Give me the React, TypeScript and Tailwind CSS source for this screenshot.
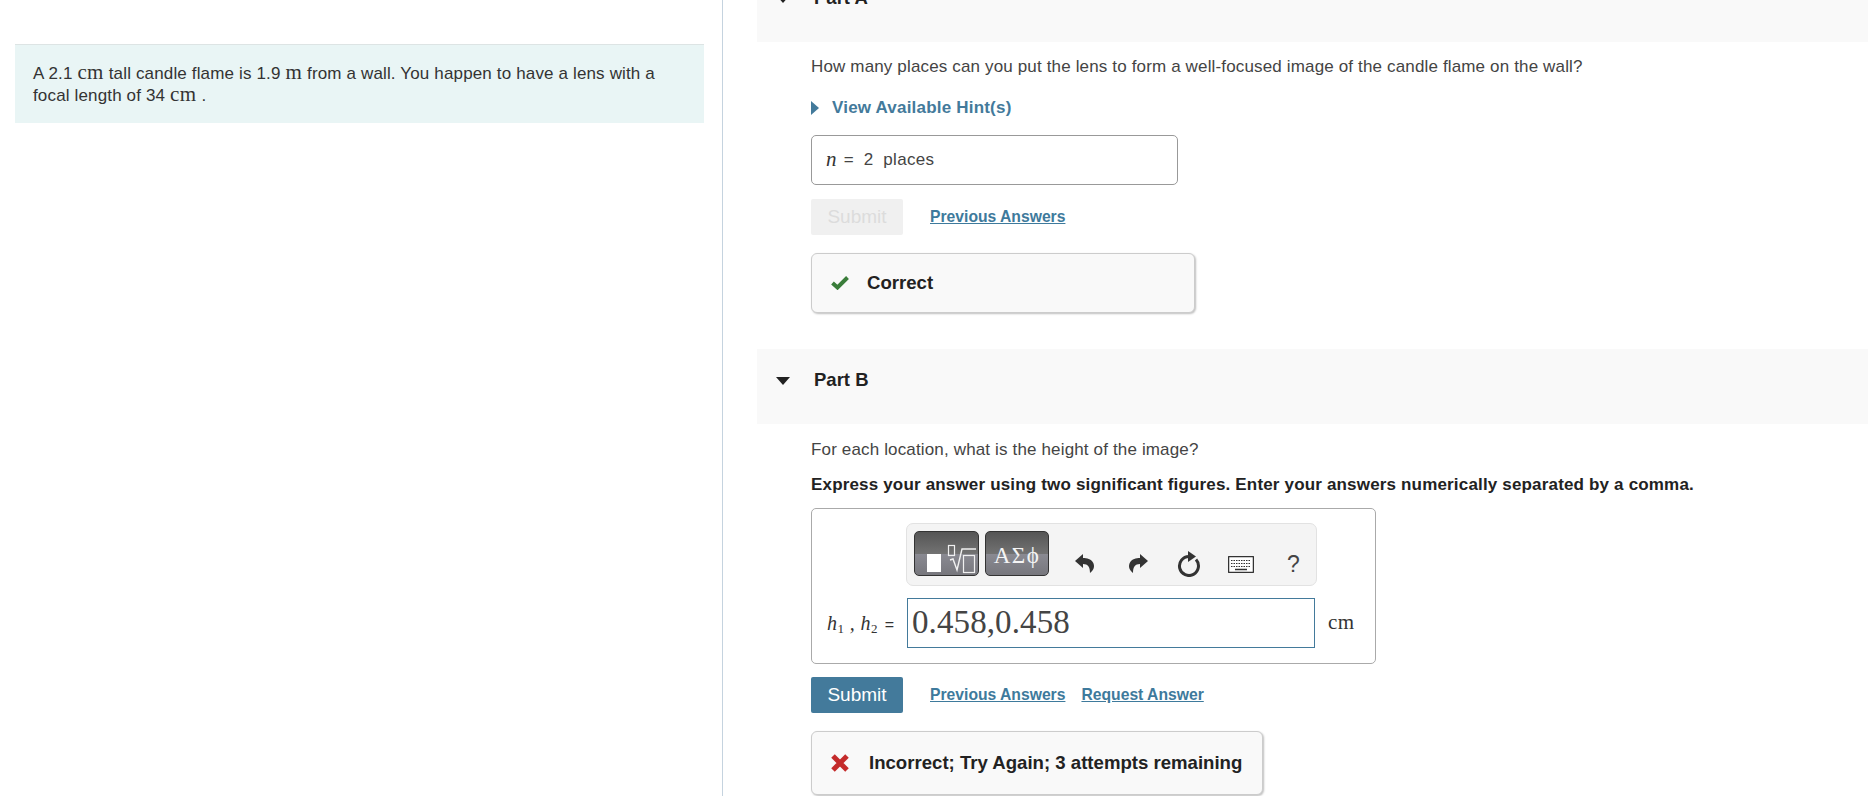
const sans = "font-['Liberation_Sans',Arial,sans-serif]";
const serif = "font-['Liberation_Serif','Times_New_Roman',serif]";

function Unit({ children }: { children: string }) {
  return <span className={`${serif} text-[21px] tracking-[0.4px] text-[#333]`}>{children}</span>;
}

function PartHeader({ label }: { label: string }) {
  return (
    <div className="flex h-[75px] bg-[#f9f9f9] pl-[19px] pt-[20px]">
      <svg className="mt-[8px]" width="14" height="8" viewBox="0 0 14 8" fill="#222">
        <path d="M0 0h14L7 8z" />
      </svg>
      <span className="ml-[24px] text-[18.5px] leading-[22px] font-bold tracking-normal text-[#222]">{label}</span>
    </div>
  );
}

function SubmitRow({ disabled, request }: { disabled?: boolean; request?: boolean }) {
  return (
    <div className="flex items-center tracking-normal">
      <button
        className={`h-[36px] w-[92px] rounded-[2px] text-[19px] ${
          disabled ? 'bg-[#f0f0f0] text-[#dcdcdc]' : 'bg-[#437a9b] text-white'
        }`}
      >
        Submit
      </button>
      <a className="ml-[27px] text-[15.7px] font-bold text-[#3e7a9c] underline">Previous Answers</a>
      {request && <a className="ml-[16px] text-[15.7px] font-bold text-[#3e7a9c] underline">Request Answer</a>}
    </div>
  );
}

function Feedback({ children, icon, width }: { children: string; icon: React.ReactNode; width: string }) {
  return (
    <div
      className={`flex items-center rounded-[6px] border border-[#ccc] bg-[#f9f9f9] pl-[19px] text-[18.6px] font-bold tracking-normal text-[#222] shadow-[1px_1px_2px_rgba(0,0,0,0.25)] ${width}`}
    >
      {icon}
      {children}
    </div>
  );
}

function PaletteButton({ children, width }: { children: React.ReactNode; width: string }) {
  return (
    <div
      className={`flex h-[45px] items-center justify-center overflow-hidden rounded-[5px] border border-[#333] bg-[linear-gradient(#555_0%,#727272_50%,#8a8a92_51%,#77777d_100%)] ${width}`}
    >
      {children}
    </div>
  );
}

function Toolbar() {
  return (
    <div className="ml-[94px] flex h-[63px] w-[411px] items-start rounded-[7px] border border-[#e2e2e2] bg-[#f4f4f4] pt-[7px] pl-[7px]">
      <PaletteButton width="w-[65px]">
        <svg width="63" height="43" viewBox="0 0 63 43" fill="none" stroke="#f0f0f0" strokeWidth="1.2">
          <rect x="12" y="22" width="14" height="18" fill="#fff" stroke="none" />
          <rect x="33.5" y="13.5" width="6" height="10" />
          <path d="M35 28l3-1 4 11 5-21h14" strokeWidth="1.4" />
          <rect x="48.5" y="23.5" width="11" height="17" />
        </svg>
      </PaletteButton>
      <div className="ml-[6px]">
        <PaletteButton width="w-[64px]">
          <span className={`${serif} mt-[6px] text-[23px] tracking-[1.5px] text-[#f4f4f4]`}>ΑΣϕ</span>
        </PaletteButton>
      </div>
      <div className="mt-[20px] ml-[26px] flex items-center">
        <svg width="20" height="22" viewBox="0 0 20 22" fill="#333">
          <path d="M8 1L0 8l8 7v-4c5 0 7 3 7 9 4-3 5-7 3-10.500C16 6 12 5 8 5z" />
        </svg>
        <svg className="ml-[33px]" width="20" height="22" viewBox="0 0 20 22" fill="#333">
          <path d="M12 1l8 7-8 7v-4c-5 0-7 3-7 9-4-3-5-7-3-10.500C4 6 8 5 12 5z" />
        </svg>
        <svg className="ml-[29px]" width="24" height="26" viewBox="0 0 24 26" fill="none" stroke="#333" strokeWidth="3">
          <path d="M19 8.600A9.500 9.500 0 1 1 12 5.500" />
          <path d="M11 0l8 5.500-8 5.500z" fill="#333" stroke="none" />
        </svg>
        <svg className="ml-[27px]" width="26" height="17" viewBox="0 0 26 17" fill="none" stroke="#333">
          <rect x="0.500" y="0.500" width="25" height="16" rx="1" fill="#fff" strokeWidth="1.500" />
          <path d="M3 4.500h20M3 7.500h20M3 10.500h20" strokeDasharray="1.500 1" />
          <path d="M7 13.500h12" strokeWidth="1.500" />
        </svg>
        <span className="ml-[33px] text-[23px] leading-[24px] text-[#444]">?</span>
      </div>
    </div>
  );
}

export default function App() {
  return (
    <div className={`flex h-[796px] overflow-hidden bg-white ${sans} text-[17px] tracking-[0.15px] text-[#444]`}>
      <div className="h-full w-[723px] shrink-0 border-r border-[#c5d3df] pt-[44px] pl-[15px]">
        <div className="h-[79px] w-[689px] border-t border-[#dde4e4] bg-[#e9f5f5] pt-[17px] pl-[18px] leading-[21px] text-[#333]">
          <p>
            A 2.1 <Unit>cm</Unit> tall candle flame is 1.9 <Unit>m</Unit> from a wall. You happen to have a lens with a
          </p>
          <p>
            focal length of 34 <Unit>cm</Unit> .
          </p>
        </div>
      </div>

      <div className="-mt-[33px] flex-1 pl-[34px]">
        <PartHeader label="Part A" />

        <div className="pl-[54px]">
          <p className="mt-[15px] leading-[20px]">
            How many places can you put the lens to form a well-focused image of the candle flame on the wall?
          </p>
          <div className="mt-[21px] flex h-[20px] items-center text-[#437a9b]">
            <svg width="8" height="14" viewBox="0 0 8 14" fill="#437a9b">
              <path d="M0 0l8 7-8 7z" />
            </svg>
            <span className="ml-[13px] font-bold tracking-[0.2px]">View Available Hint(s)</span>
          </div>
          <div className="mt-[17px] flex h-[50px] w-[367px] items-center rounded-[5px] border border-[#999] pl-[14px]">
            <i className={`${serif} text-[21px] text-[#333]`}>n</i>
            <span className="ml-[7px]">=</span>
            <span className="ml-[10px]">2</span>
            <span className="ml-[10px] tracking-[0.3px]">places</span>
          </div>
          <div className="mt-[14px]">
            <SubmitRow disabled />
          </div>
          <div className="mt-[18px]">
            <Feedback
              width="h-[60px] w-[384px]"
              icon={
                <svg className="mr-[18px]" width="18" height="14" viewBox="0 0 18 14" fill="none" stroke="#3a7d3a" strokeWidth="4">
                  <path d="M1.500 7l5 4.500L16.500 1.500" />
                </svg>
              }
            >
              Correct
            </Feedback>
          </div>
        </div>

        <div className="mt-[36px]">
          <PartHeader label="Part B" />
        </div>

        <div className="pl-[54px]">
          <p className="mt-[16px] leading-[20px]">For each location, what is the height of the image?</p>
          <p className="mt-[15px] text-[17px] leading-[20px] font-bold tracking-[0.17px] text-[#222]">
            Express your answer using two significant figures. Enter your answers numerically separated by a comma.
          </p>

          <div className="mt-[13px] h-[156px] w-[565px] rounded-[5px] border border-[#aaa] pt-[14px]">
            <Toolbar />
            <div className="mt-[12px] flex items-center">
              <span className={`${serif} ml-[15px] w-[80px] text-[20px] tracking-[0.4px] whitespace-nowrap text-[#333] italic`}>
                h<sub className="text-[13px] not-italic">1</sub> , h<sub className="text-[13px] not-italic">2</sub>
                <span className={`${sans} ml-[7px] text-[16px] not-italic`}>=</span>
              </span>
              <div
                className={`h-[50px] w-[408px] border border-[#437a9b] pl-[4px] ${serif} text-[33px] leading-[46px] tracking-[0.1px] text-[#444]`}
              >
                0.458,0.458
              </div>
              <span className="ml-[13px]">
                <Unit>cm</Unit>
              </span>
            </div>
          </div>

          <div className="mt-[13px]">
            <SubmitRow request />
          </div>
          <div className="mt-[18px]">
            <Feedback
              width="h-[64px] w-[452px]"
              icon={
                <svg className="mr-[20px]" width="18" height="18" viewBox="0 0 18 18" fill="none" stroke="#c42b2b" strokeWidth="5">
                  <path d="M2 2l14 14M16 2L2 16" />
                </svg>
              }
            >
              Incorrect; Try Again; 3 attempts remaining
            </Feedback>
          </div>
        </div>
      </div>
    </div>
  );
}
